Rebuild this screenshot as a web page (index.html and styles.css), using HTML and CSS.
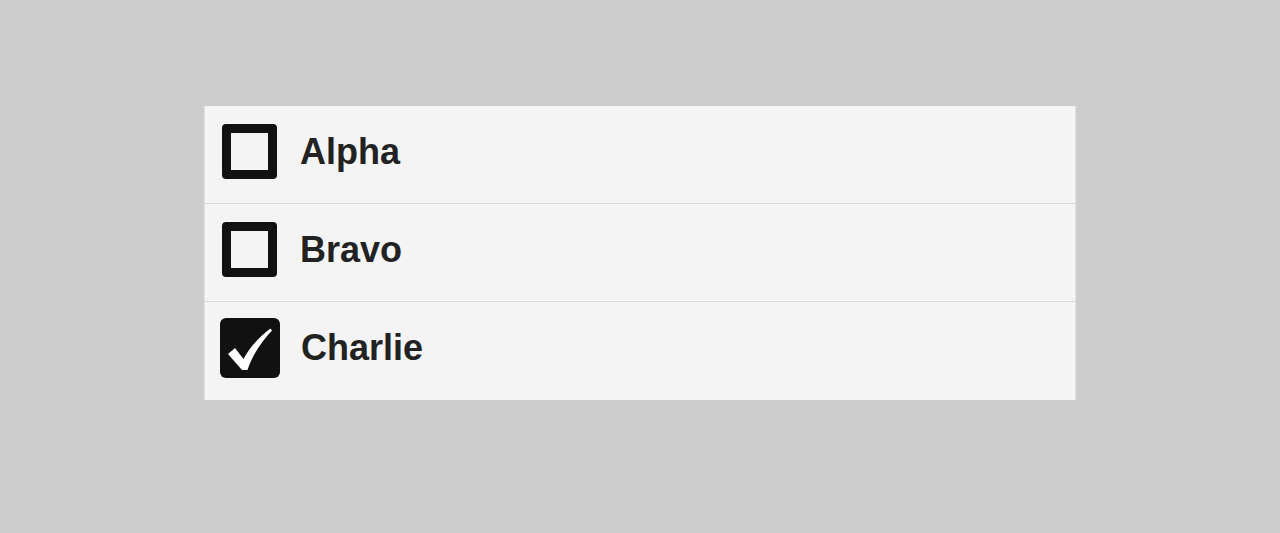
FILE: index.html
```html
<!DOCTYPE html>
<html lang="en">
<head>
  <meta charset="UTF-8">
  <meta name="viewport" content="width=device-width, initial-scale=1.0">
  <title>Checklist</title>
  <link rel="stylesheet" href="styles.css">
</head>
<body>
  <div class="cl-page">
    <div class="cl-list">
      <label class="cl-item">
        <span class="cl-box"></span>
        <span class="cl-label">Alpha</span>
      </label>
      <label class="cl-item">
        <span class="cl-box"></span>
        <span class="cl-label">Bravo</span>
      </label>
      <label class="cl-item">
        <span class="cl-box checked">
          <svg viewBox="0 0 60 60" width="60" height="60">
            <path d="M8 36 L15 30 L23.5 41 C30 29 39 19 50.5 10.5 L52 12.5 C42 23 33 36 27.5 52 L22 52 Z" fill="#fff"/>
          </svg>
        </span>
        <span class="cl-label">Charlie</span>
      </label>
    </div>
  </div>
</body>
</html>
```

FILE: styles.css
```css
body {
  margin: 0;
  background-color: #cccccc;
  font-family: "Liberation Sans", Arial, sans-serif;
}

.cl-page {
  padding: 106px 0 0 204px;
}

.cl-list {
  width: 872px;
  background-color: #f4f4f4;
  box-shadow: 1px 0 0 #e4e4e4 inset, -1px 0 0 #e4e4e4 inset;
}

.cl-item {
  display: flex;
  align-items: flex-start;
  height: 98px;
  box-sizing: border-box;
  padding: 18px 0 0 18px;
  border-bottom: 1px solid #d9d9d9;
  cursor: pointer;
}

.cl-item:last-child {
  border-bottom: none;
}

.cl-box {
  width: 55px;
  height: 55px;
  box-sizing: border-box;
  border: 9px solid #111;
  border-radius: 4px;
  flex-shrink: 0;
}

.cl-box.checked {
  width: 60px;
  height: 60px;
  margin: -2px -2px 0 -2px;
  border: none;
  border-radius: 6px;
  background-color: #111;
}

.cl-box svg {
  display: block;
}

.cl-label {
  margin: 10px 0 0 23px;
  font-size: 36px;
  line-height: 36px;
  font-weight: bold;
  color: #222;
}
```
